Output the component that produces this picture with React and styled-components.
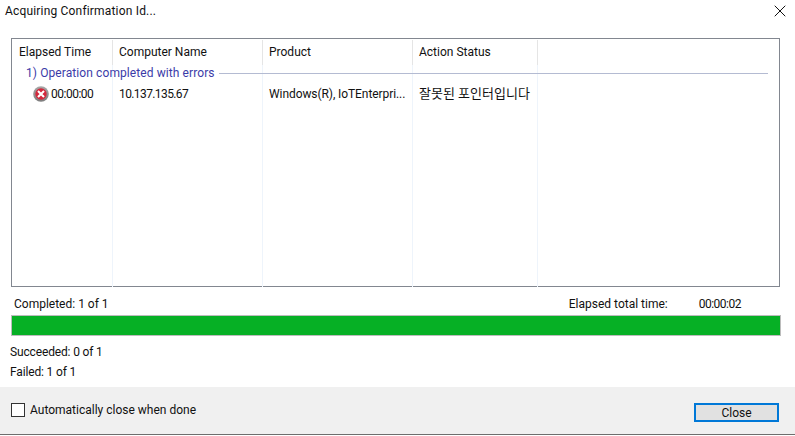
import React from "react";
import styled, { createGlobalStyle } from "styled-components";
import { X } from "lucide-react";

const GlobalStyle = createGlobalStyle`
  html, body {
    margin: 0;
    padding: 0;
    background: #fff;
  }
  body {
    font-family: Roboto, "Noto Sans CJK KR", sans-serif;
    font-size: 12px;
    color: #111;
  }
`;

const COLUMNS = "101px 150px 150px 125px 1fr";

const Dialog = styled.div`
  width: 795px;
  height: 436px;
  display: flex;
  flex-direction: column;
  overflow: hidden;
`;

const TitleBar = styled.div`
  height: 38px;
  flex: none;
  display: flex;
  justify-content: space-between;
  padding: 3px 5px 0 5px;
  box-sizing: border-box;
`;

const Title = styled.div`
  font-size: 12px;
  line-height: 17px;
  letter-spacing: 0.18px;
`;

const CloseIcon = styled(X)`
  width: 20px;
  height: 20px;
  margin-top: -2px;
  color: #111;
`;

const ListPanel = styled.div`
  margin-left: 11px;
  width: 769px;
  height: 249px;
  flex: none;
  box-sizing: border-box;
  border: 1px solid #828790;
  background: #fff;
`;

const HeaderRow = styled.div`
  display: grid;
  grid-template-columns: ${COLUMNS};
  height: 25px;
  margin-top: 1px;
`;

const HeaderCell = styled.div`
  padding: 3px 0 0 6px;
  line-height: 18px;
  border-right: ${(p) => (p.$last ? "none" : "1px solid #e5e5e5")};

  &:first-child {
    padding-left: 7px;
  }
`;

const ListBody = styled.div`
  height: 222px;
  background-image:
    linear-gradient(#eef4fb, #eef4fb),
    linear-gradient(#eef4fb, #eef4fb),
    linear-gradient(#eef4fb, #eef4fb),
    linear-gradient(#eef4fb, #eef4fb);
  background-size: 1px 100%;
  background-repeat: no-repeat;
  background-position: 100px 0, 250px 0, 400px 0, 525px 0;
`;

const GroupRow = styled.div`
  display: flex;
  align-items: center;
  gap: 4px;
  height: 16px;
  margin-right: 11px;
  padding-left: 14px;
  color: #3b3ba8;
  letter-spacing: 0.09px;
`;

const GroupLine = styled.div`
  flex: 1;
  height: 1px;
  background: #b4bbd2;
`;

const DataRow = styled.div`
  display: grid;
  grid-template-columns: ${COLUMNS};
  height: 24px;
  margin-top: 1px;
  align-items: center;
`;

const Cell = styled.div`
  padding-left: 6px;
  white-space: nowrap;
  overflow: hidden;
`;

const IpCell = styled(Cell)`
  letter-spacing: -0.6px;
`;

const ProductCell = styled(Cell)`
  letter-spacing: -0.08px;
`;

const StatusCell = styled(Cell)`
  font-size: 13px;
  padding-bottom: 3px;
`;

const ElapsedCell = styled.div`
  display: flex;
  align-items: center;
  gap: 2px;
  padding-left: 21px;
  letter-spacing: -0.5px;
`;

const ProgressLabels = styled.div`
  display: flex;
  justify-content: space-between;
  height: 28px;
  flex: none;
  box-sizing: border-box;
  padding: 9px 54px 0 14px;
  line-height: 17px;
`;

const Elapsed = styled.div`
  display: flex;
  gap: 31px;
`;

const ElapsedValue = styled.span`
  letter-spacing: -0.5px;
`;

const ProgressTrack = styled.div`
  margin-left: 11px;
  width: 770px;
  height: 21px;
  flex: none;
  box-sizing: border-box;
  border: 1px solid #bcbcbc;
  background: #e6e6e6;
`;

const ProgressFill = styled.div`
  height: 100%;
  background: #06b025;
`;

const Summary = styled.div`
  flex: 1;
  padding: 6px 0 0 10px;
  line-height: 20px;
  letter-spacing: -0.15px;
`;

const Footer = styled.div`
  height: 48px;
  flex: none;
  box-sizing: border-box;
  background: #f0f0f0;
  border-bottom: 1px solid #6d6d6d;
  display: flex;
  justify-content: space-between;
  padding: 16px 16px 0 11px;
  margin-bottom: 1px;
`;

const CheckLabel = styled.label`
  display: flex;
  gap: 5px;
  line-height: 14px;
`;

const CheckBox = styled.span`
  width: 14px;
  height: 14px;
  box-sizing: border-box;
  background: #fff;
  border: 1px solid #333;
`;

const CloseButton = styled.button`
  width: 85px;
  height: 19px;
  box-sizing: border-box;
  border: 2px solid #0078d7;
  background: #e1e1e1;
  font: inherit;
  color: inherit;
  padding: 1px 0 0;
  line-height: 14px;
`;

function ErrorIcon() {
  return (
    <svg width="16" height="16" viewBox="0 0 16 16">
      <defs>
        <linearGradient id="errorRing" x1="0" y1="0" x2="0" y2="1">
          <stop offset="0" stopColor="#a8a8a8" />
          <stop offset="1" stopColor="#7c7c7c" />
        </linearGradient>
      </defs>
      <circle cx="8" cy="8" r="7.8" fill="url(#errorRing)" />
      <circle cx="8" cy="8" r="5.7" fill="#d3283c" />
      <path d="M5 5l6 6M11 5l-6 6" stroke="#fff" strokeWidth="2.1" />
    </svg>
  );
}

const headers = ["Elapsed Time", "Computer Name", "Product", "Action Status", ""];

export default function App() {
  return (
    <Dialog>
      <GlobalStyle />
      <TitleBar>
        <Title>Acquiring Confirmation Id...</Title>
        <CloseIcon strokeWidth={1.2} absoluteStrokeWidth />
      </TitleBar>

      <ListPanel>
        <HeaderRow>
          {headers.map((h, i) => (
            <HeaderCell key={i} $last={i === headers.length - 1}>
              {h}
            </HeaderCell>
          ))}
        </HeaderRow>
        <ListBody>
          <GroupRow>
            1) Operation completed with errors
            <GroupLine />
          </GroupRow>
          <DataRow>
            <ElapsedCell>
              <ErrorIcon />
              00:00:00
            </ElapsedCell>
            <IpCell>10.137.135.67</IpCell>
            <ProductCell>Windows(R), IoTEnterpri...</ProductCell>
            <StatusCell>잘못된 포인터입니다</StatusCell>
          </DataRow>
        </ListBody>
      </ListPanel>

      <ProgressLabels>
        <span>Completed: 1 of 1</span>
        <Elapsed>
          <span>Elapsed total time:</span>
          <ElapsedValue>00:00:02</ElapsedValue>
        </Elapsed>
      </ProgressLabels>
      <ProgressTrack>
        <ProgressFill style={{ width: "100%" }} />
      </ProgressTrack>
      <Summary>
        <div>Succeeded: 0 of 1</div>
        <div>Failed: 1 of 1</div>
      </Summary>

      <Footer>
        <CheckLabel>
          <CheckBox />
          Automatically close when done
        </CheckLabel>
        <CloseButton>Close</CloseButton>
      </Footer>
    </Dialog>
  );
}
